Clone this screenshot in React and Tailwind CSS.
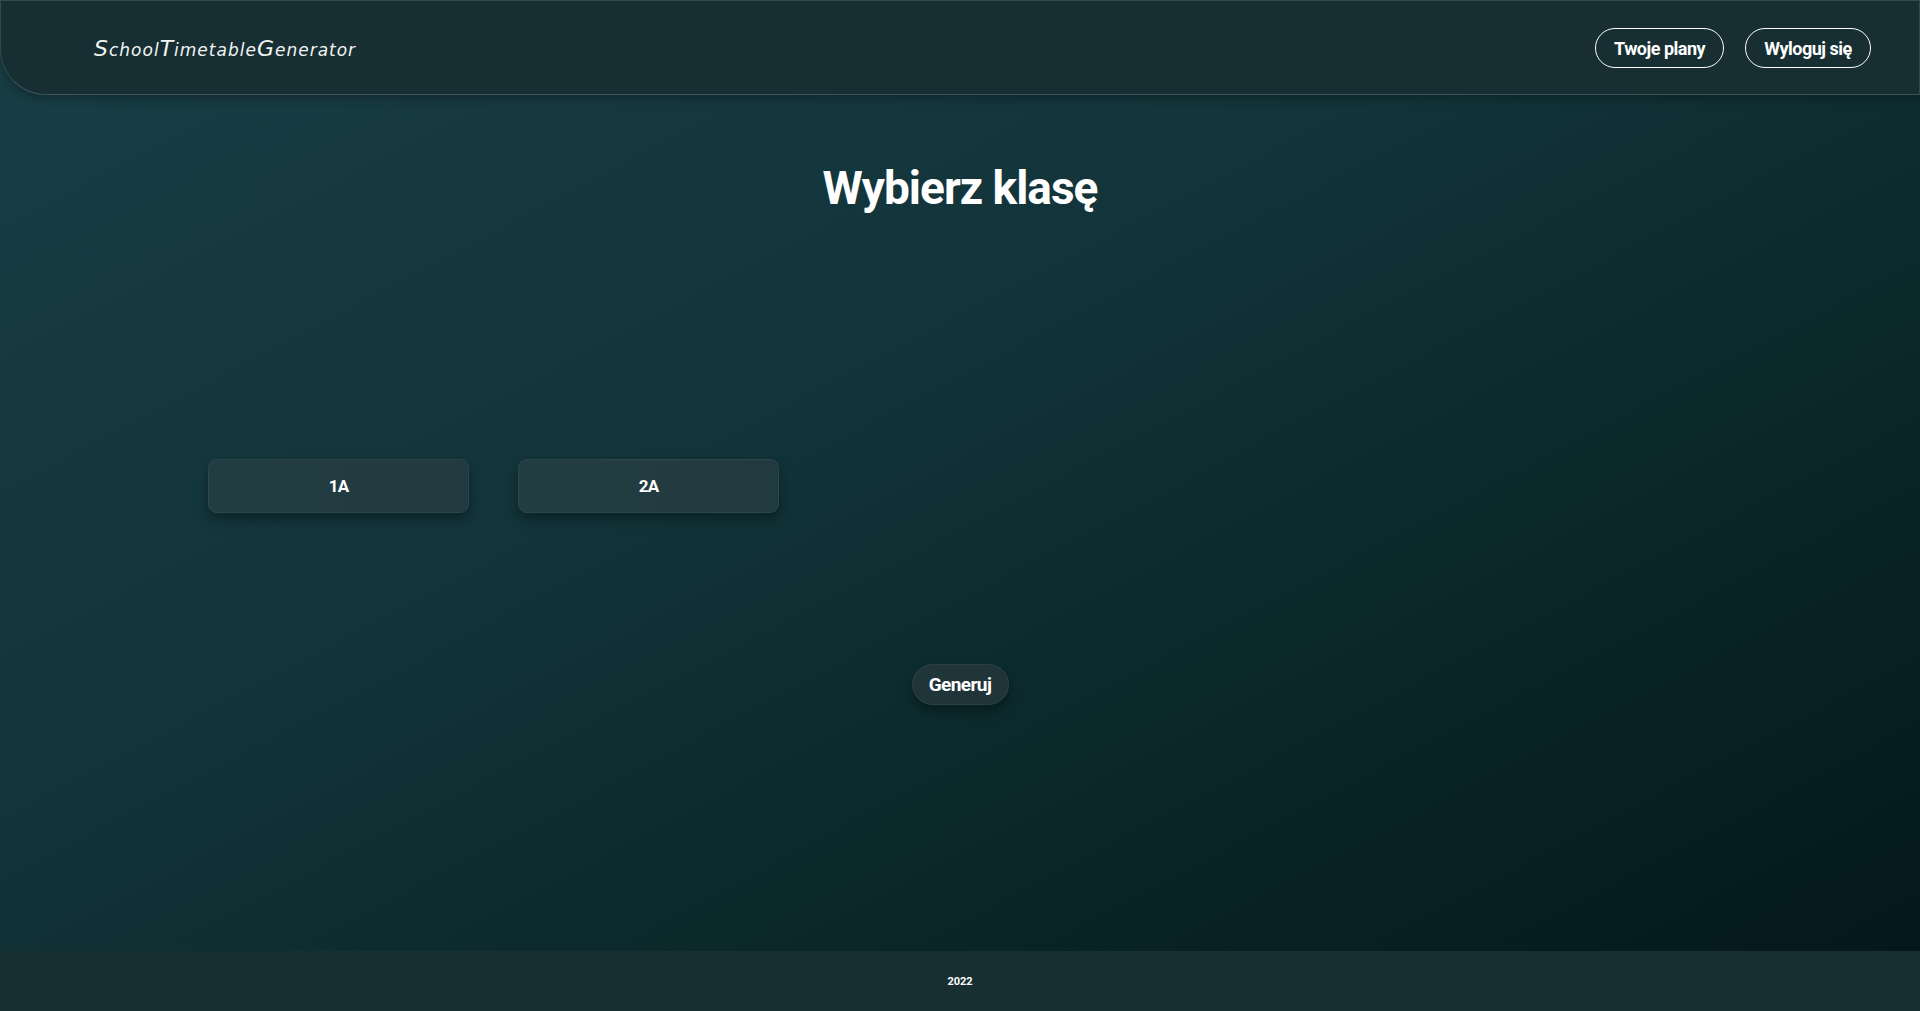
export default function App() {
  const classes = ["1A", "2A"];

  return (
    <div className="min-h-screen flex flex-col bg-[linear-gradient(to_bottom_right,#193e45_0%,#12343a_40%,#0a2628_70%,#031719_100%)] font-['Roboto',sans-serif] text-white">
      <header className="h-[95px] flex items-center justify-between bg-[#172e33] border border-t-[#324a4e] border-l-[#324a4e] border-b-[#3b5558] border-r-[#324a4e] rounded-bl-[46px] shadow-[0_4px_10px_rgba(0,0,0,0.25)] pl-[93px] pr-[48px]">
        <div className="pt-[2px] font-['DejaVu_Sans',sans-serif] italic text-[17px] tracking-[1px] text-[#f2f4f4] select-none">
          <span className="text-[22px]">S</span>chool
          <span className="text-[22px]">T</span>imetable
          <span className="text-[22px]">G</span>enerator
        </div>
        <nav className="flex items-center gap-[21px]">
          <button className="h-[40px] w-[129px] pt-[2px] rounded-full border border-white text-[18px] font-bold tracking-[-0.5px]">
            Twoje plany
          </button>
          <button className="h-[40px] w-[126px] pt-[2px] rounded-full border border-white text-[18px] font-bold tracking-[-0.5px]">
            Wyloguj się
          </button>
        </nav>
      </header>

      <main className="flex-1 flex flex-col">
        <h1 className="mt-[70px] text-center text-[46px] leading-none font-bold tracking-[-1px]">
          Wybierz klasę
        </h1>

        <div className="mt-[248px] pl-[208px] flex gap-[49px]">
          {classes.map((c) => (
            <button
              key={c}
              className="h-[54px] w-[261px] pt-[1px] rounded-[9px] bg-[linear-gradient(to_right,#223d42,#213a3f)] border border-[#2b474b] shadow-[0_6px_12px_rgba(0,0,0,0.35)] text-[17px] font-bold tracking-[-0.8px]"
            >
              {c}
            </button>
          ))}
        </div>

        <div className="mt-[151px] flex justify-center">
          <button className="h-[41px] w-[97px] pt-[1px] rounded-full bg-[#1f3539] border border-[#2a4145] shadow-[0_6px_12px_rgba(0,0,0,0.35)] text-[19px] font-bold tracking-[-0.6px]">
            Generuj
          </button>
        </div>
      </main>

      <footer className="h-[60px] pt-[3px] flex items-center justify-center bg-[#172e33]">
        <span className="text-[11px] font-bold">2022</span>
      </footer>
    </div>
  );
}
